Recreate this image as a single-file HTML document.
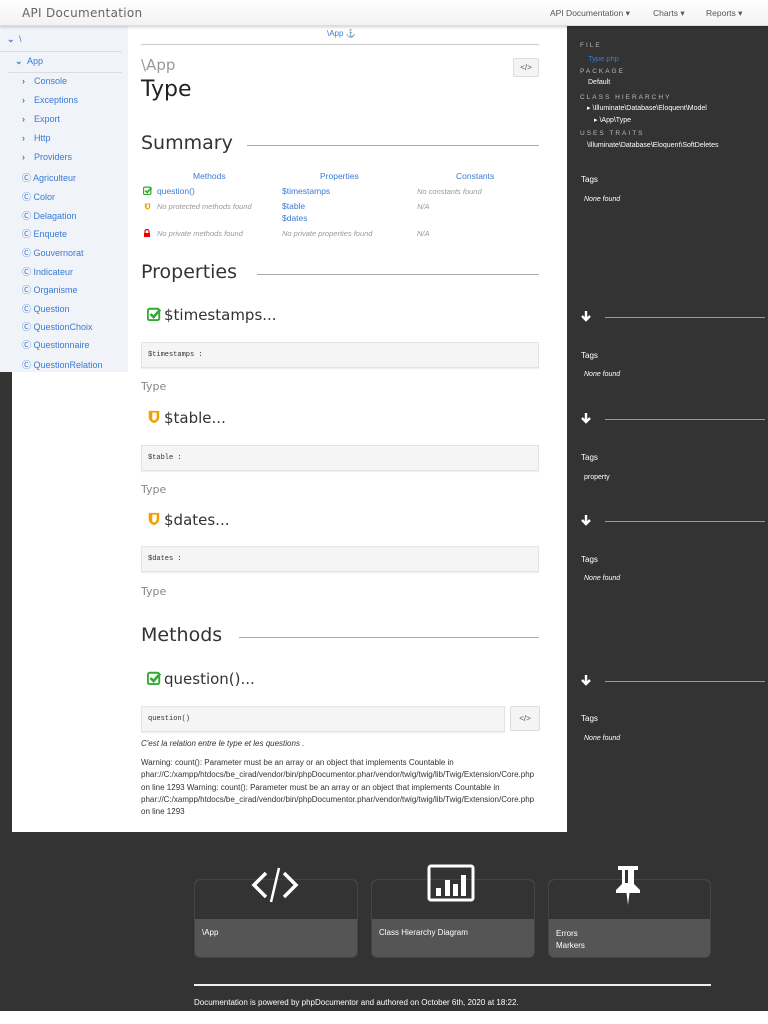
<!DOCTYPE html>
<html><head><meta charset="utf-8"><style>
*{margin:0;padding:0;box-sizing:border-box}
body{width:768px;height:1024px;background:#fff;font-family:"Liberation Sans",sans-serif;position:relative;overflow:hidden}
.a{position:absolute}
.dark{background:#333}
.nav{left:0;top:0;width:768px;height:26px;background:linear-gradient(#fff,#f2f2f2);border-bottom:1px solid #ddd;box-shadow:0 1px 3px rgba(0,0,0,.2);z-index:5}
.blue{color:#3a7bd5}
.side{left:0;top:26px;width:128px;height:346px;background:#f0f3f7;font-size:9px;color:#3a7bd5}
.side div{position:absolute;white-space:nowrap}
.side b{font-weight:bold;color:#3a7bd5;display:inline-block;width:12px}
.h{font-family:"DejaVu Sans",sans-serif;color:#333}
.h svg{vertical-align:-1px;margin-right:3px}
.code{background:#f5f5f5;border:1px solid #e3e3e3;box-shadow:0 1px 1px rgba(0,0,0,.08);font-family:"Liberation Mono",monospace;font-size:7px;color:#333;padding:0 6px;line-height:24px}
.btn{background:#f4f4f4;border:1px solid #ddd;border-radius:2px;font-size:8px;color:#555;text-align:center}
.gray{color:#999;font-style:italic;font-size:7.5px}
.rp{color:#fff;font-size:7px}
.lbl{color:#bbb;font-size:6.5px;letter-spacing:2px}
.card{background:#555;border-radius:6px;border:1px solid #444}
.card .t{position:absolute;left:0;top:0;right:0;height:39px;background:#333;border-radius:6px 6px 0 0}
</style></head><body>
<svg width="0" height="0" style="position:absolute">
<defs>
<symbol id="chk" viewBox="0 0 16 16"><rect x="1" y="2" width="13" height="13" rx="2" fill="none" stroke="#3a3" stroke-width="2.2"/><path d="M4 8 L7.5 11.5 L15 3" fill="none" stroke="#3a3" stroke-width="3"/></symbol>
<symbol id="shd" viewBox="0 0 16 16"><path d="M2 1 H14 V8 C14 12 11 14 8 15 C5 14 2 12 2 8 Z" fill="#f0a000"/><path d="M6 3 H11 V8 C11 10.5 9.5 11.5 8 12 C7 11.6 6 11 6 10 Z" fill="#fff"/></symbol>
<symbol id="dn" viewBox="0 0 12 12"><path d="M6 1 V10 M2 6 L6 10 L10 6" fill="none" stroke="#fff" stroke-width="2.4"/></symbol>
</defs></svg>
<div class="a dark" style="left:0;top:26px;width:768px;height:985px"></div>
<div class="a" style="left:0;top:1011px;width:768px;height:13px;background:#fff"></div>
<div class="a" style="left:12px;top:26px;width:555px;height:806px;background:#fff"></div>
<div class="a nav">
<div class="a" style="left:22px;top:6px;font-size:12px;color:#666;font-family:'DejaVu Sans',sans-serif;letter-spacing:.3px">API Documentation</div>
<div class="a" style="left:550px;top:8px;font-size:8.5px;color:#555">API Documentation ▾</div>
<div class="a" style="left:653px;top:8px;font-size:8.5px;color:#555">Charts ▾</div>
<div class="a" style="left:706px;top:8px;font-size:8.5px;color:#555">Reports ▾</div>
</div>
<div class="a side">
<div style="left:7px;top:8px"><b>⌄</b>\</div>
<div style="left:0;top:25px;width:122px;border-top:1px solid #ddd"></div>
<div style="left:15px;top:30px"><b>⌄</b>App</div>
<div style="left:8px;top:46px;width:114px;border-top:1px solid #ddd"></div>
<div style="left:22px;top:50px"><b>›</b>Console</div>
<div style="left:22px;top:69px"><b>›</b>Exceptions</div>
<div style="left:22px;top:88px"><b>›</b>Export</div>
<div style="left:22px;top:107px"><b>›</b>Http</div>
<div style="left:22px;top:126px"><b>›</b>Providers</div>
<div style="left:22px;top:145px">Ⓒ Agriculteur</div>
<div style="left:22px;top:164px">Ⓒ Color</div>
<div style="left:22px;top:183px">Ⓒ Delagation</div>
<div style="left:22px;top:201px">Ⓒ Enquete</div>
<div style="left:22px;top:220px">Ⓒ Gouvernorat</div>
<div style="left:22px;top:239px">Ⓒ Indicateur</div>
<div style="left:22px;top:257px">Ⓒ Organisme</div>
<div style="left:22px;top:276px">Ⓒ Question</div>
<div style="left:22px;top:294px">Ⓒ QuestionChoix</div>
<div style="left:22px;top:312px">Ⓒ Questionnaire</div>
<div style="left:22px;top:332px">Ⓒ QuestionRelation</div>
</div>
<div class="a blue" style="left:327px;top:29px;font-size:8px">\App <span style="color:#333">⚓</span></div>
<div class="a" style="left:141px;top:44px;width:398px;border-top:1px solid #ccc"></div>
<div class="a h" style="left:141px;top:56px;font-size:15px;color:#999">\App</div>
<div class="a h" style="left:141px;top:77px;font-size:22px;color:#222">Type</div>
<div class="a btn" style="left:513px;top:58px;width:26px;height:19px;line-height:17px">&lt;/&gt;</div>
<div class="a h" style="left:141px;top:132px;font-size:19px">Summary</div>
<div class="a" style="left:247px;top:145px;width:292px;border-top:1px solid #aaa"></div>
<div class="a blue" style="left:193px;top:171px;font-size:8.5px">Methods</div>
<div class="a blue" style="left:320px;top:171px;font-size:8.5px">Properties</div>
<div class="a blue" style="left:456px;top:171px;font-size:8.5px">Constants</div>
<svg class="a" style="left:143px;top:186px" width="9" height="9"><use href="#chk"/></svg>
<div class="a blue" style="left:157px;top:186px;font-size:8.5px">question()</div>
<svg class="a" style="left:144px;top:203px" width="7" height="7"><use href="#shd"/></svg>
<div class="a gray" style="left:157px;top:202px">No protected methods found</div>
<svg class="a" style="left:143px;top:229px" width="8" height="8"><path d="M2 4 V2.5 A2 2 0 0 1 6 2.5 V4" stroke="#e00" fill="none" stroke-width="1.2"/><rect x="1" y="4" width="6" height="4" fill="#e00"/></svg>
<div class="a gray" style="left:157px;top:229px">No private methods found</div>
<div class="a blue" style="left:282px;top:186px;font-size:8.5px">$timestamps</div>
<div class="a blue" style="left:282px;top:201px;font-size:8.5px">$table</div>
<div class="a blue" style="left:282px;top:213px;font-size:8.5px">$dates</div>
<div class="a gray" style="left:282px;top:229px">No private properties found</div>
<div class="a gray" style="left:417px;top:187px">No constants found</div>
<div class="a gray" style="left:417px;top:202px">N/A</div>
<div class="a gray" style="left:417px;top:229px">N/A</div>

<div class="a h" style="left:141px;top:261px;font-size:19px">Properties</div>
<div class="a" style="left:257px;top:274px;width:282px;border-top:1px solid #aaa"></div>

<div class="a h" style="left:147px;top:306px;font-size:15px"><svg width="14" height="14"><use href="#chk"/></svg>$timestamps...</div>
<div class="a code" style="left:141px;top:342px;width:398px;height:26px">$timestamps :</div>
<div class="a h" style="left:141px;top:380px;font-size:11px;color:#888">Type</div>
<div class="a h" style="left:147px;top:409px;font-size:15px"><svg width="14" height="14"><use href="#shd"/></svg>$table...</div>
<div class="a code" style="left:141px;top:445px;width:398px;height:26px">$table :</div>
<div class="a h" style="left:141px;top:483px;font-size:11px;color:#888">Type</div>
<div class="a h" style="left:147px;top:511px;font-size:15px"><svg width="14" height="14"><use href="#shd"/></svg>$dates...</div>
<div class="a code" style="left:141px;top:546px;width:398px;height:26px">$dates :</div>
<div class="a h" style="left:141px;top:585px;font-size:11px;color:#888">Type</div>

<div class="a h" style="left:141px;top:624px;font-size:19px">Methods</div>
<div class="a" style="left:239px;top:637px;width:300px;border-top:1px solid #aaa"></div>
<div class="a h" style="left:147px;top:670px;font-size:15px"><svg width="14" height="14"><use href="#chk"/></svg>question()...</div>
<div class="a code" style="left:141px;top:706px;width:364px;height:26px">question()</div>
<div class="a btn" style="left:510px;top:706px;width:30px;height:25px;line-height:23px">&lt;/&gt;</div>
<div class="a" style="left:141px;top:739px;font-size:8px;font-style:italic;color:#333">C'est la relation entre le type et les questions .</div>
<div class="a" style="left:141px;top:757px;font-size:8px;color:#333;line-height:12.3px;width:426px;overflow:hidden;white-space:nowrap">Warning: count(): Parameter must be an array or an object that implements Countable in<br>phar://C:/xampp/htdocs/be_cirad/vendor/bin/phpDocumentor.phar/vendor/twig/twig/lib/Twig/Extension/Core.php<br>on line 1293 Warning: count(): Parameter must be an array or an object that implements Countable in<br>phar://C:/xampp/htdocs/be_cirad/vendor/bin/phpDocumentor.phar/vendor/twig/twig/lib/Twig/Extension/Core.php<br>on line 1293</div>

<div class="a lbl" style="left:580px;top:42px">FILE</div>
<div class="a blue" style="left:588px;top:54px;font-size:7.5px">Type.php</div>
<div class="a lbl" style="left:580px;top:68px">PACKAGE</div>
<div class="a rp" style="left:588px;top:79px">Default</div>
<div class="a lbl" style="left:580px;top:94px">CLASS HIERARCHY</div>
<div class="a rp" style="left:587px;top:104px">▸ \Illuminate\Database\Eloquent\Model</div>
<div class="a rp" style="left:594px;top:116px">▸ \App\Type</div>
<div class="a lbl" style="left:580px;top:130px">USES TRAITS</div>
<div class="a rp" style="left:587px;top:142px">\Illuminate\Database\Eloquent\SoftDeletes</div>
<div class="a rp" style="left:581px;top:175px;font-size:8px">Tags</div>
<div class="a rp" style="left:584px;top:196px;font-style:italic">None found</div>

<svg class="a" style="left:580px;top:310px" width="12" height="12"><use href="#dn"/></svg>
<div class="a" style="left:605px;top:317px;width:160px;border-top:1px solid #999"></div>
<div class="a rp" style="left:581px;top:351px;font-size:8px">Tags</div>
<div class="a rp" style="left:584px;top:371px;font-style:italic">None found</div>
<svg class="a" style="left:580px;top:412px" width="12" height="12"><use href="#dn"/></svg>
<div class="a" style="left:605px;top:419px;width:160px;border-top:1px solid #999"></div>
<div class="a rp" style="left:581px;top:453px;font-size:8px">Tags</div>
<div class="a rp" style="left:584px;top:474px">property</div>
<svg class="a" style="left:580px;top:514px" width="12" height="12"><use href="#dn"/></svg>
<div class="a" style="left:605px;top:521px;width:160px;border-top:1px solid #999"></div>
<div class="a rp" style="left:581px;top:555px;font-size:8px">Tags</div>
<div class="a rp" style="left:584px;top:575px;font-style:italic">None found</div>
<svg class="a" style="left:580px;top:674px" width="12" height="12"><use href="#dn"/></svg>
<div class="a" style="left:605px;top:681px;width:160px;border-top:1px solid #999"></div>
<div class="a rp" style="left:581px;top:714px;font-size:8px">Tags</div>
<div class="a rp" style="left:584px;top:735px;font-style:italic">None found</div>

<div class="a card" style="left:194px;top:879px;width:164px;height:79px"><div class="t"></div><div class="a rp" style="left:7px;top:48px;font-size:8px">\App</div></div>
<div class="a card" style="left:371px;top:879px;width:164px;height:79px"><div class="t"></div><div class="a rp" style="left:7px;top:48px;font-size:8px">Class Hierarchy Diagram</div></div>
<div class="a card" style="left:548px;top:879px;width:163px;height:79px"><div class="t"></div><div class="a rp" style="left:7px;top:48px;font-size:8px;line-height:12px">Errors<br>Markers</div></div>
<svg class="a" style="left:250px;top:866px" width="50" height="38" viewBox="0 0 50 38"><g stroke="#fff" stroke-width="3.5" fill="none"><path d="M16 7 L4 19 L16 31"/><path d="M34 7 L46 19 L34 31"/><path d="M29 2 L21 36" stroke-width="2.5"/></g></svg>
<svg class="a" style="left:427px;top:864px" width="48" height="38"><rect x="2" y="2" width="44" height="34" rx="2" fill="none" stroke="#fff" stroke-width="3"/><rect x="9" y="24" width="5" height="8" fill="#fff"/><rect x="18" y="16" width="5" height="16" fill="#fff"/><rect x="26" y="20" width="5" height="12" fill="#fff"/><rect x="34" y="11" width="5" height="21" fill="#fff"/></svg>
<svg class="a" style="left:613px;top:864px" width="30" height="42"><path d="M5 2 H25 V6 H21 V20 L27 26 V29 H3 V26 L9 20 V6 H5 Z" fill="#fff"/><rect x="12" y="6" width="3" height="13" fill="#333"/><path d="M13.5 29 H16.5 L15 41 Z" fill="#fff"/></svg>
<div class="a" style="left:194px;top:984px;width:517px;border-top:2px solid #eee"></div>
<div class="a rp" style="left:194px;top:998px;font-size:8px">Documentation is powered by phpDocumentor and authored on October 6th, 2020 at 18:22.</div>
</body></html>
